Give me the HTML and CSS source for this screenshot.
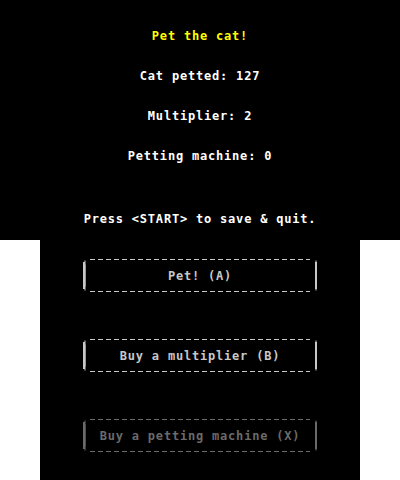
FILE: index.html
```html
<!DOCTYPE html>
<html lang="en">
<head>
    <meta charset="UTF-8">
    <meta name="viewport" content="width=device-width, initial-scale=1.0">
    <title>Pet the cat!</title>
    <link rel="stylesheet" href="styles.css">
</head>
<body>
    <div class="top-screen">
        <p class="line title">Pet the cat!</p>
        <p class="line">Cat petted: <span id="petted">127</span></p>
        <p class="line">Multiplier: <span id="multiplier">2</span></p>
        <p class="line">Petting machine: <span id="machines">0</span></p>
        <p class="line hint">Press &lt;START&gt; to save &amp; quit.</p>
    </div>

    <div class="bottom-screen">
        <div class="btn">Pet! (A)</div>
        <div class="btn">Buy a multiplier (B)</div>
        <div class="btn disabled">Buy a petting machine (X)</div>
    </div>
</body>
</html>
```

FILE: styles.css
```css
body {
    margin: 0;
    background: white;
    font-family: 'DejaVu Sans Mono', 'Liberation Mono', monospace;
    font-weight: bold;
    font-size: 12px;
    letter-spacing: 0.8px;
}
.top-screen {
    width: 400px;
    height: 240px;
    background: black;
    color: white;
    padding-top: 16px;
    box-sizing: border-box;
}
.line {
    margin: 0;
    height: 40px;
    line-height: 40px;
    text-align: center;
}
.title {
    color: #ffff00;
}
.hint {
    margin-top: 23px;
}
.bottom-screen {
    width: 320px;
    height: 240px;
    margin: 0 auto;
    background: black;
    padding-top: 19px;
    box-sizing: border-box;
}
.btn {
    position: relative;
    height: 33px;
    margin: 0 43px 47px;
    display: flex;
    align-items: center;
    justify-content: center;
    color: #c8c8c8;
    background-image:
        repeating-linear-gradient(90deg, currentColor 0 5px, transparent 5px 8px),
        repeating-linear-gradient(90deg, currentColor 0 5px, transparent 5px 8px);
    background-size: calc(100% - 14px) 1px;
    background-position: 7px 0, 7px 100%;
    background-repeat: no-repeat;
}
/* side brackets with a dot at each end */
.btn::before,
.btn::after {
    content: "";
    position: absolute;
    top: 3px;
    bottom: 3px;
    width: 2px;
    background: currentColor;
}
.btn::before {
    left: 0;
    box-shadow: 1px -2px 0 -0.5px currentColor, 1px 2px 0 -0.5px currentColor;
}
.btn::after {
    right: 0;
    box-shadow: 0 -2px 0 -0.5px currentColor, 0 2px 0 -0.5px currentColor;
}
.btn.disabled {
    color: #6a6a6a;
}
```
